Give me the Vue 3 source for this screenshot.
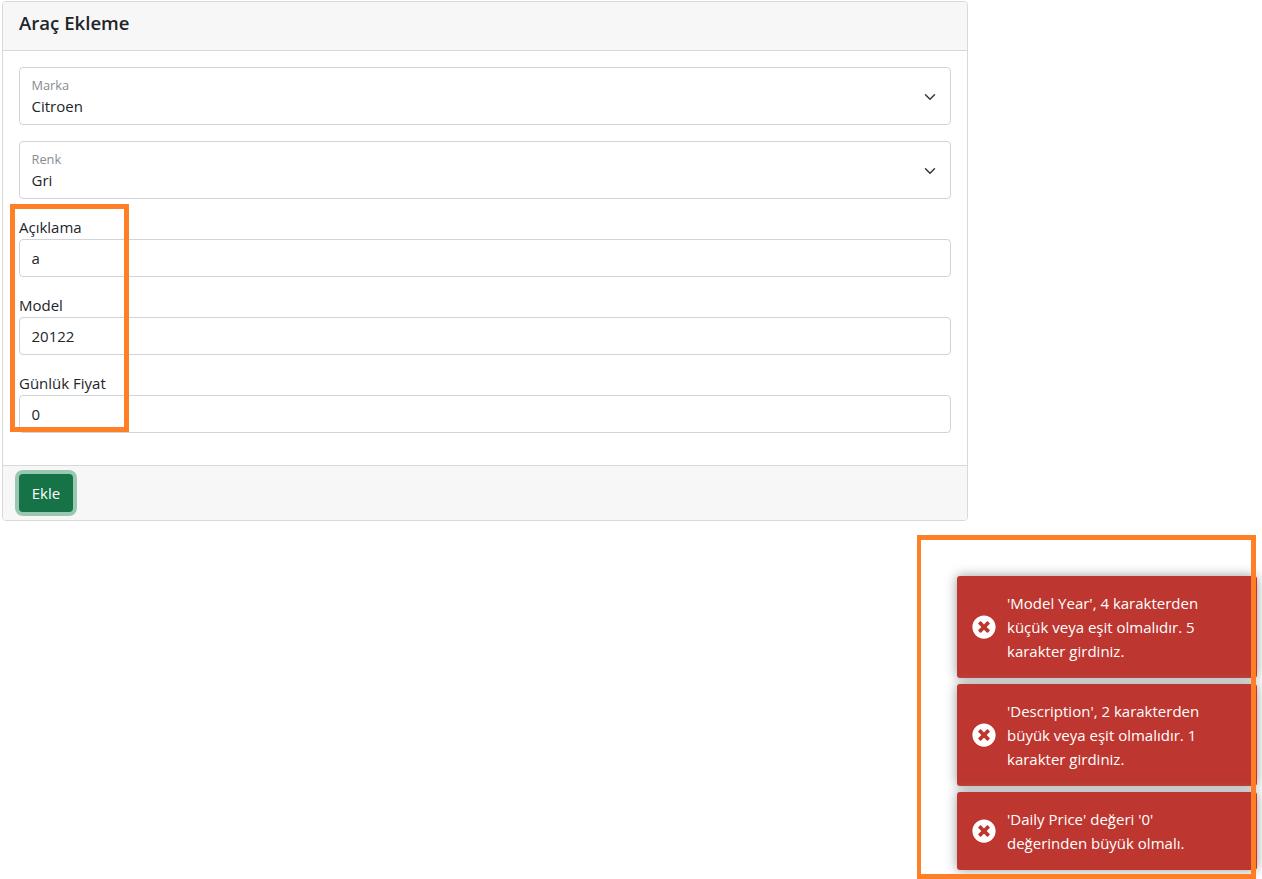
<script setup>
const selects = [
  { label: 'Marka', value: 'Citroen' },
  { label: 'Renk', value: 'Gri' },
]
const inputs = [
  { label: 'Açıklama', value: 'a' },
  { label: 'Model', value: '20122' },
  { label: 'Günlük Fiyat', value: '0' },
]
const toasts = [
  { text: "'Model Year', 4 karakterden küçük veya eşit olmalıdır. 5 karakter girdiniz.", cls: 'tall' },
  { text: "'Description', 2 karakterden büyük veya eşit olmalıdır. 1 karakter girdiniz.", cls: 'tall' },
  { text: "'Daily Price' değeri '0' değerinden büyük olmalı.", cls: 'short' },
]
</script>

<template>
  <div class="page">
    <section class="card">
      <header class="card-header">Araç Ekleme</header>
      <div class="card-body">
        <div v-for="s in selects" :key="s.label" class="select">
          <span class="select-label">{{ s.label }}</span>
          <span class="select-value">{{ s.value }}</span>
          <svg class="chevron" viewBox="0 0 16 16" width="16" height="12" aria-hidden="true">
            <path d="M2 5l6 6 6-6" fill="none" stroke="#343a40" stroke-width="2" stroke-linecap="round" stroke-linejoin="round" />
          </svg>
        </div>
        <div class="fields">
          <div v-for="f in inputs" :key="f.label" class="field">
            <label class="field-label">{{ f.label }}</label>
            <div class="input">{{ f.value }}</div>
          </div>
        </div>
      </div>
      <footer class="card-footer">
        <button class="btn" type="button">Ekle</button>
      </footer>
    </section>

    <div class="mark mark-form"></div>

    <div class="toasts">
      <div v-for="t in toasts" :key="t.text" class="toast" :class="t.cls">
        <svg class="toast-icon" viewBox="0 0 512 512" width="24" height="24" aria-hidden="true">
          <path fill="#fff" d="M256 8C119 8 8 119 8 256s111 248 248 248 248-111 248-248S393 8 256 8zm121.6 313.1c4.7 4.7 4.7 12.3 0 17L338 377.6c-4.7 4.7-12.3 4.7-17 0L256 312l-65.1 65.6c-4.7 4.7-12.3 4.7-17 0L134.4 338c-4.7-4.7-4.7-12.3 0-17l65.6-65-65.6-65.1c-4.7-4.7-4.7-12.3 0-17l39.6-39.6c4.7-4.7 12.3-4.7 17 0l65 65.7 65.1-65.6c4.7-4.7 12.3-4.7 17 0l39.6 39.6c4.7 4.7 4.7 12.3 0 17L312 256l65.6 65.1z" />
        </svg>
        <p class="toast-text">{{ t.text }}</p>
      </div>
    </div>

    <div class="mark mark-toasts"></div>
  </div>
</template>

<style scoped>
.page {
  position: relative;
  width: 1262px;
  height: 879px;
  overflow: hidden;
  background: #fff;
  padding: 1px 0 0 2px;
  box-sizing: border-box;
  font-family: "Open Sans", "Noto Sans", sans-serif;
  font-size: 15px;
  color: #212529;
}
.card {
  width: 966px;
  height: 520px;
  box-sizing: border-box;
  border: 1px solid #d9d9d9;
  border-radius: 4px;
  display: flex;
  flex-direction: column;
  overflow: hidden;
}
.card-header {
  height: 49px;
  box-sizing: border-box;
  background: #f7f7f7;
  border-bottom: 1px solid #d9d9d9;
  padding: 8px 16px 0;
  font-size: 18.6px;
  font-weight: 600;
  line-height: 26px;
}
.card-body {
  flex: 1;
  padding: 16px 16px 0;
}
.select {
  position: relative;
  height: 58px;
  box-sizing: border-box;
  border: 1px solid #ced4da;
  border-radius: 4px;
  margin-bottom: 16px;
  padding: 9px 11.5px 0;
  display: flex;
  flex-direction: column;
}
.select-label {
  font-size: 12.8px;
  line-height: 17px;
  color: #868b90;
}
.select-value {
  line-height: 24px;
}
.chevron {
  position: absolute;
  right: 12px;
  top: 23px;
}
.fields {
  display: flex;
  flex-direction: column;
  gap: 16px;
}
.field-label {
  display: block;
  height: 24px;
  line-height: 24px;
}
.input {
  height: 38px;
  box-sizing: border-box;
  border: 1px solid #ced4da;
  border-radius: 4px;
  padding: 6px 11.5px;
  line-height: 24px;
}
.card-footer {
  height: 55px;
  box-sizing: border-box;
  background: #f7f7f7;
  border-top: 1px solid #d9d9d9;
  padding: 8px 16px 0;
}
.btn {
  display: block;
  width: 54px;
  height: 38px;
  border: 0;
  border-radius: 4px;
  background: #157347;
  box-shadow: 0 0 0 4px rgba(60, 153, 110, 0.5);
  color: #fff;
  font-family: inherit;
  font-size: 15px;
  line-height: 38px;
  padding: 0;
}
.mark {
  position: absolute;
  box-sizing: border-box;
  border-style: solid;
  border-color: #ff7f27;
  pointer-events: none;
}
.mark-form {
  left: 10px;
  top: 204px;
  width: 119px;
  height: 228px;
  border-width: 5px;
}
.mark-toasts {
  left: 917px;
  top: 535px;
  width: 339px;
  height: 344px;
  border-width: 5px 5px 5px 4px;
}
.toasts {
  position: absolute;
  left: 957px;
  top: 576px;
  width: 300px;
  display: flex;
  flex-direction: column;
  gap: 6px;
}
.toast {
  box-sizing: border-box;
  background: #bd362f;
  color: #fff;
  border-radius: 3px;
  box-shadow: 0 0 12px #999;
  display: flex;
  align-items: center;
  padding: 0 15px;
}
.toast.tall { height: 102px; }
.toast.short { height: 78px; }
.toast-icon {
  flex: none;
  margin-right: 11px;
}
.toast-text {
  margin: 0;
  width: 205px;
  font-size: 15px;
  line-height: 24px;
}
</style>
